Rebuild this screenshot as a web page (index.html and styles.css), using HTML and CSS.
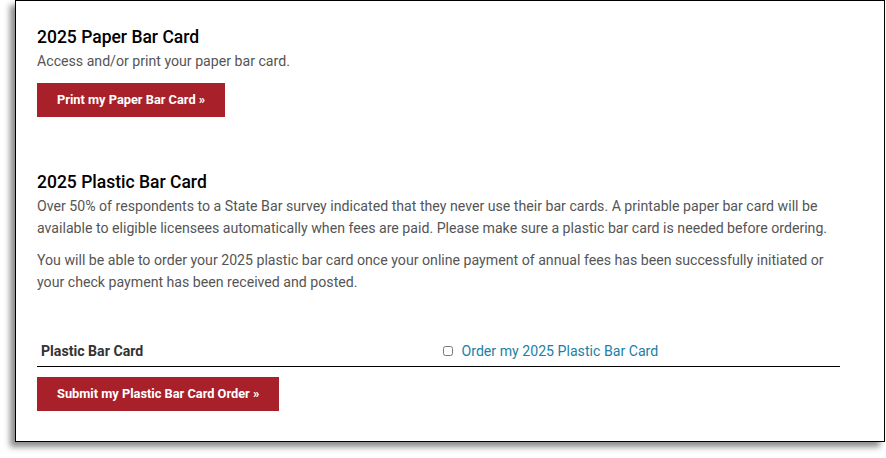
FILE: index.html
```html
<!DOCTYPE html>
<html>
<head>
<meta charset="utf-8">
<link rel="stylesheet" href="styles.css">
</head>
<body>
<div class="frame">
  <section class="block">
    <h2 class="title">2025 Paper Bar Card</h2>
    <p class="text">Access and/or print your paper bar card.</p>
    <button class="btn">Print my Paper Bar Card »</button>
  </section>
  <section class="block block-plastic">
    <h2 class="title">2025 Plastic Bar Card</h2>
    <p class="text">Over 50% of respondents to a State Bar survey indicated that they never use their bar cards. A printable paper bar card will be available to eligible licensees automatically when fees are paid. Please make sure a plastic bar card is needed before ordering.</p>
    <p class="text text-second">You will be able to order your 2025 plastic bar card once your online payment of annual fees has been successfully initiated or your check payment has been received and posted.</p>
    <div class="order-row">
      <div class="cell cell-label">Plastic Bar Card</div>
      <div class="cell cell-option">
        <label class="check"><input type="checkbox" class="box"><span>Order my 2025 Plastic Bar Card</span></label>
      </div>
    </div>
    <button class="btn btn-submit">Submit my Plastic Bar Card Order »</button>
  </section>
</div>
</body>
</html>
```

FILE: styles.css
```css
html, body {
  margin: 0;
  padding: 0;
  background: #fff;
}
body {
  font-family: Roboto, "Liberation Sans", Arial, sans-serif;
  width: 886px;
  height: 458px;
  overflow: hidden;
}
.frame {
  box-sizing: border-box;
  margin-left: 15px;
  width: 870px;
  height: 442px;
  border: 1px solid #000;
  background: #fff;
  box-shadow: -5px 5px 6px rgba(0, 0, 0, 0.45);
  padding: 26px 0 0 21px;
}
.block {
  width: 803px;
}
.title {
  margin: 0;
  font-size: 17.5px;
  line-height: 20px;
  font-weight: 500;
  color: #000;
}
.text {
  margin: 3px 0 0;
  font-size: 14.15px;
  line-height: 22.5px;
  color: #555;
}
.text-second {
  margin-top: 9px;
}
.btn {
  display: block;
  margin-top: 10px;
  height: 34px;
  padding: 0 20px;
  border: 0;
  background: #a8212a;
  color: #fff;
  font-family: Roboto, "Liberation Sans", Arial, sans-serif;
  font-size: 12.8px;
  font-weight: 700;
  cursor: pointer;
}
.block-plastic {
  margin-top: 55px;
}
.order-row {
  display: grid;
  grid-template-columns: 1fr 1fr;
  margin-top: 40px;
  border-bottom: 1px solid #000;
}
.cell {
  padding: 8px 4px 6px;
  font-size: 14.15px;
  line-height: 18px;
}
.cell-label {
  font-weight: 700;
  color: #333;
}
.check {
  display: flex;
  align-items: center;
  gap: 9px;
  color: #1b7fa6;
}
.box {
  margin: 0;
  width: 10px;
  height: 10px;
}
.btn-submit {
  margin-top: 10px;
}
```
